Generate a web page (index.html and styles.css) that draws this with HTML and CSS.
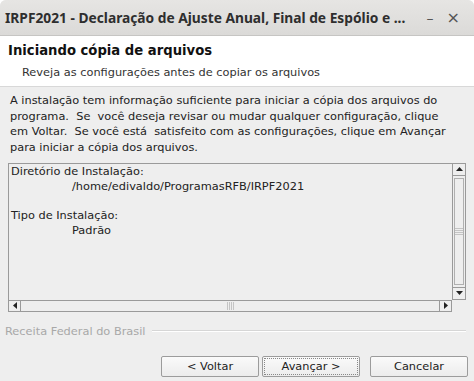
FILE: index.html
```html
<!DOCTYPE html>
<html lang="pt">
<head>
<meta charset="utf-8">
<title>IRPF2021</title>
<link rel="stylesheet" href="styles.css">
</head>
<body>
<div class="window">
  <div class="titlebar">
    <span class="title">IRPF2021 - Declaração de Ajuste Anual, Final de Espólio e ...</span>
    <span class="ctrl min">–</span>
    <span class="ctrl close">×</span>
  </div>
  <div class="header">
    <div class="h-title">Iniciando cópia de arquivos</div>
    <div class="h-sub">Reveja as configurações antes de copiar os arquivos</div>
  </div>
  <div class="body">
    <p class="intro">A instalação tem informação suficiente para iniciar a cópia dos arquivos do<br>programa.&nbsp; Se&nbsp; você deseja revisar ou mudar qualquer configuração, clique<br>em Voltar.&nbsp; Se você está&nbsp; satisfeito com as configurações, clique em Avançar<br>para iniciar a cópia dos arquivos.</p>
    <div class="textbox">
      <div class="text">
        <div>Diretório de Instalação:</div>
        <div class="ind">/home/edivaldo/ProgramasRFB/IRPF2021</div>
        <div>&nbsp;</div>
        <div>Tipo de Instalação:</div>
        <div class="ind">Padrão</div>
      </div>
      <div class="vscroll">
        <div class="arrow up"><svg width="7" height="4" viewBox="0 0 7 4"><path d="M3.5 0 L7 4 L0 4 Z" fill="#222"/></svg></div>
        <div class="vtrack"><div class="vthumb"><i></i><i></i><i></i><i></i></div></div>
        <div class="arrow down"><svg width="7" height="4" viewBox="0 0 7 4"><path d="M0 0 L7 0 L3.5 4 Z" fill="#222"/></svg></div>
      </div>
      <div class="hscroll">
        <div class="harrow left"><svg width="4" height="7" viewBox="0 0 4 7"><path d="M0 3.5 L4 0 L4 7 Z" fill="#222"/></svg></div>
        <div class="htrack"><div class="hthumb"><i></i><i></i><i></i><i></i></div></div>
        <div class="harrow right"><svg width="4" height="7" viewBox="0 0 4 7"><path d="M4 3.5 L0 0 L0 7 Z" fill="#222"/></svg></div>
      </div>
      <div class="corner"></div>
    </div>
  </div>
  <div class="etched">
    <span class="etched-label">Receita Federal do Brasil</span>
    <span class="etched-line"></span>
  </div>
  <div class="buttons">
    <button class="btn">&lt; Voltar</button>
    <button class="btn focus">Avançar &gt;</button>
    <button class="btn cancel">Cancelar</button>
  </div>
</div>
</body>
</html>
```

FILE: styles.css
```css
html, body {
  margin: 0;
  padding: 0;
  background: #ffffff;
}
.window {
  width: 474px;
  height: 381px;
  display: flex;
  flex-direction: column;
  background: #eeeeee;
  font-family: "DejaVu Sans", sans-serif;
  font-size: 11.35px;
  color: #222;
  overflow: hidden;
  border-radius: 6px 6px 0 0;
}
.titlebar {
  height: 35px;
  flex: none;
  display: flex;
  align-items: center;
  background: linear-gradient(#e6e5e3, #dbdad8);
  border-bottom: 1px solid #c6c5c3;
  padding-left: 5px;
}
.title {
  font-family: "Noto Sans", sans-serif;
  font-weight: bold;
  font-size: 13.75px;
  color: #2e2e2e;
  white-space: nowrap;
  flex: 1;
}
.ctrl {
  font-family: "DejaVu Sans", sans-serif;
  color: #555;
  font-size: 14px;
}
.min { margin-right: 13px; }
.close { margin-right: 14px; font-size: 16px; }
.header {
  height: 51px;
  flex: none;
  background: #ffffff;
  border-bottom: 1px solid #d8d8d8;
  padding-left: 8px;
  box-sizing: border-box;
}
.h-title {
  font-weight: bold;
  font-size: 13.2px;
  margin-top: 7px;
  color: #111;
}
.h-sub {
  margin-top: 7px;
  padding-left: 14px;
  color: #333;
}
.body {
  padding: 6px 8px 0 8px;
}
.intro {
  margin: 0 0 0 2px;
  line-height: 15.7px;
  color: #222;
  white-space: nowrap;
}
.textbox {
  margin-top: 7px;
  width: 458px;
  height: 149px;
  display: grid;
  grid-template-columns: 1fr 14px;
  grid-template-rows: 1fr 12px;
  box-sizing: border-box;
}
.text {
  border: 1px solid #9a9a9a;
  border-right: none;
  border-bottom: none;
  padding: 0 0 0 2px;
  line-height: 14.8px;
  background: #eeeeee;
}
.ind { padding-left: 61px; }
.vscroll {
  display: flex;
  flex-direction: column;
  border: 1px solid #9a9a9a;
  background: #eeeeee;
}
.arrow {
  height: 11px;
  display: flex;
  align-items: center;
  justify-content: center;
  flex: none;
}
.arrow.up { border-bottom: 1px solid #9a9a9a; }
.arrow.down { border-top: 1px solid #9a9a9a; }
.vtrack {
  flex: 1;
  display: flex;
  align-items: center;
  justify-content: center;
  margin: 2px 1px;
  border: 1px solid #b0b0b0;
}
.vthumb {
  display: flex;
  flex-direction: column;
  gap: 1px;
  width: 10px;
}
.vthumb i { display: block; height: 1px; background: #c4c4c4; }
.hscroll {
  display: flex;
  border: 1px solid #9a9a9a;
  background: #eeeeee;
}
.harrow {
  width: 11px;
  display: flex;
  align-items: center;
  justify-content: center;
  flex: none;
}
.harrow.left { border-right: 1px solid #9a9a9a; }
.harrow.right { border-left: 1px solid #9a9a9a; }
.htrack {
  flex: 1;
  display: flex;
  align-items: center;
  justify-content: center;
}
.hthumb {
  display: flex;
  gap: 1px;
  height: 8px;
}
.hthumb i { display: block; width: 1px; background: #c4c4c4; }
.corner { background: #eeeeee; }
.etched {
  display: flex;
  align-items: center;
  margin-top: 12px;
  padding: 0 8px 0 5px;
}
.etched-label {
  color: #a8a8a8;
  white-space: nowrap;
}
.etched-line {
  flex: 1;
  height: 0;
  border-top: 1px solid #d6d6d6;
  border-bottom: 1px solid #ffffff;
  margin-left: 6px;
}
.buttons {
  display: flex;
  justify-content: flex-end;
  gap: 3px;
  padding: 18px 6px 0 0;
}
.btn {
  width: 98px;
  height: 21px;
  font-family: "DejaVu Sans", sans-serif;
  font-size: 11.35px;
  color: #222;
  background: linear-gradient(#fafafa, #ececec);
  border: 1px solid #9c9c9c;
  border-radius: 2px;
  padding: 0;
}
.btn.focus {
  outline: 1px dotted #888;
  outline-offset: -3px;
}
.btn.cancel { margin-left: 7px; }
```
